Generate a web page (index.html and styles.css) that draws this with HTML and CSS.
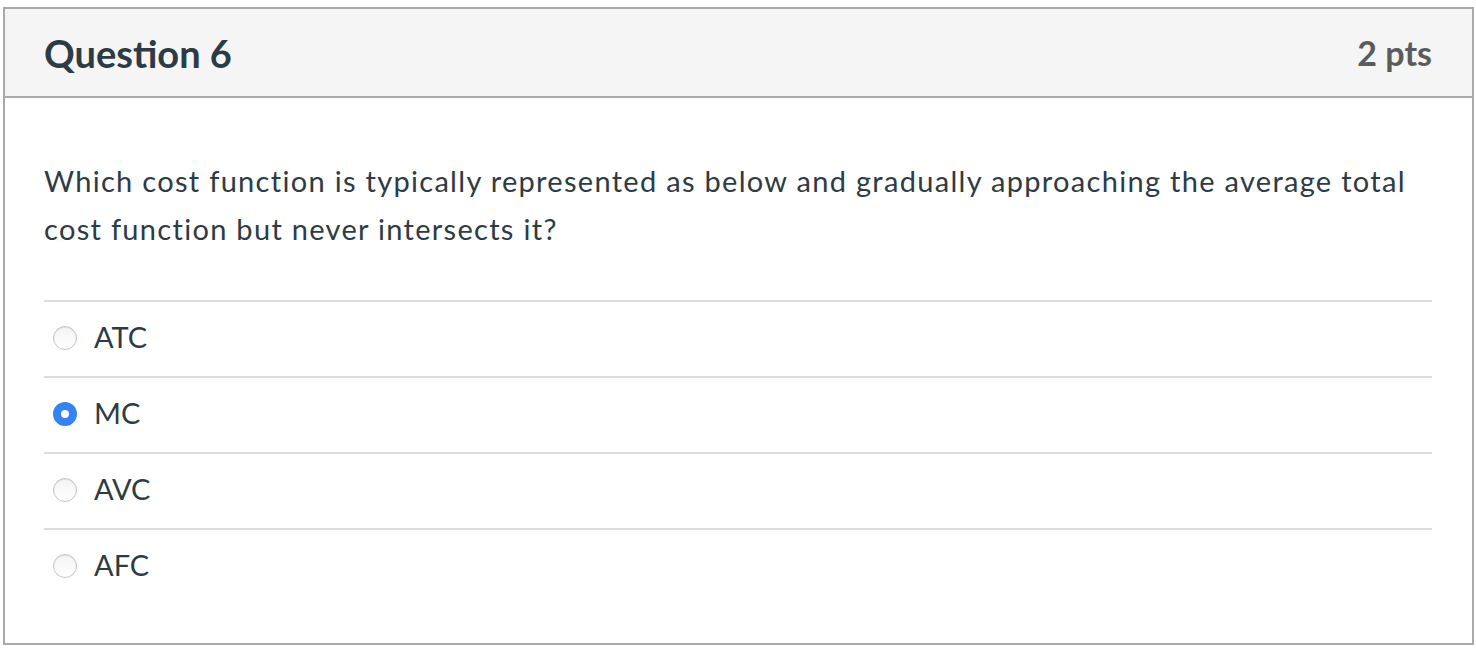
FILE: index.html
```html
<!DOCTYPE html>
<html>
<head>
<meta charset="utf-8">
<link rel="stylesheet" href="styles.css">
</head>
<body>
<div class="card">
  <div class="header">
    <h2 class="title">Question 6</h2>
    <span class="pts">2 pts</span>
  </div>
  <div class="body">
    <p class="question">Which cost function is typically represented as below and gradually approaching the average total cost function but never intersects it?</p>
    <div class="answers">
      <label class="answer"><span class="radio"></span><span class="label">ATC</span></label>
      <label class="answer"><span class="radio checked"></span><span class="label">MC</span></label>
      <label class="answer"><span class="radio"></span><span class="label">AVC</span></label>
      <label class="answer"><span class="radio"></span><span class="label">AFC</span></label>
    </div>
  </div>
</div>
</body>
</html>
```
FILE: styles.css
```css
html, body {
  margin: 0;
  padding: 0;
  background: #ffffff;
}
body {
  padding: 7px 2px 0 3px;
  font-family: Lato, "Open Sans", sans-serif;
  color: #2d3b45;
}
.card {
  border: 2px solid #a9a9a9;
  background: #fff;
  height: 638px;
  box-sizing: border-box;
}
.header {
  height: 87px;
  background: #f5f5f5;
  border-bottom: 2px solid #a9a9a9;
  display: flex;
  align-items: center;
  justify-content: space-between;
  padding: 0 40px 0 39px;
}
.title {
  margin: 0;
  font-size: 38px;
  font-weight: 700;
  color: #2d3b45;
}
.pts {
  font-size: 34px;
  font-weight: 700;
  color: #5b5b5b;
}
.body {
  padding: 59px 40px 0 39px;
}
.question {
  margin: 0 0 47px;
  font-size: 29px;
  line-height: 48px;
  letter-spacing: 1.3px;
}
.answer {
  display: flex;
  align-items: center;
  gap: 17px;
  border-top: 2px solid #dddddd;
  height: 70px;
  padding: 0 0 4px 9px;
  box-sizing: content-box;
}
.radio {
  width: 24px;
  height: 24px;
  border-radius: 50%;
  box-sizing: border-box;
  border: 1px solid #c4c4c4;
  background: linear-gradient(#f4f4f4, #ffffff);
  box-shadow: inset 0 1px 1px rgba(0,0,0,0.08);
  margin-top: 2px;
}
.radio.checked {
  border: 8px solid #3582f4;
  background: #ffffff;
  box-shadow: none;
}
.label {
  font-size: 29px;
  line-height: 32px;
}
```
